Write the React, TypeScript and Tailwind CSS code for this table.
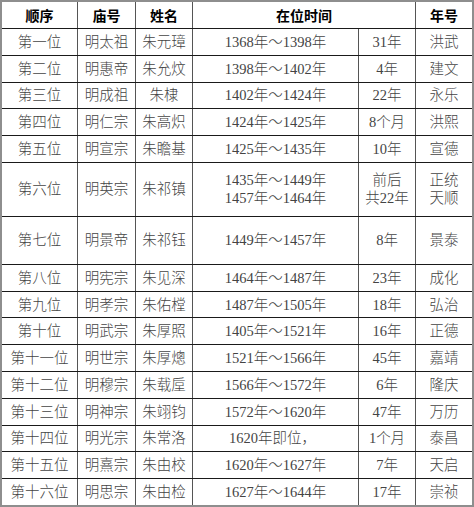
type Cell = string | string[]

interface Row {
  cells: Cell[]
  h?: string
}

const ROWS: Row[] = [
  { cells: ['第一位', '明太祖', '朱元璋', '1368年～1398年', '31年', '洪武'] },
  { cells: ['第二位', '明惠帝', '朱允炆', '1398年～1402年', '4年', '建文'] },
  { cells: ['第三位', '明成祖', '朱棣', '1402年～1424年', '22年', '永乐'] },
  { cells: ['第四位', '明仁宗', '朱高炽', '1424年～1425年', '8个月', '洪熙'] },
  { cells: ['第五位', '明宣宗', '朱瞻基', '1425年～1435年', '10年', '宣德'] },
  {
    cells: [
      '第六位', '明英宗', '朱祁镇',
      ['1435年～1449年', '1457年～1464年'],
      ['前后', '共22年'],
      ['正统', '天顺'],
    ],
    h: 'h-[54px]',
  },
  { cells: ['第七位', '明景帝', '朱祁钰', '1449年～1457年', '8年', '景泰'], h: 'h-[48px]' },
  { cells: ['第八位', '明宪宗', '朱见深', '1464年～1487年', '23年', '成化'] },
  { cells: ['第九位', '明孝宗', '朱佑樘', '1487年～1505年', '18年', '弘治'] },
  { cells: ['第十位', '明武宗', '朱厚照', '1405年～1521年', '16年', '正德'] },
  { cells: ['第十一位', '明世宗', '朱厚熜', '1521年～1566年', '45年', '嘉靖'] },
  { cells: ['第十二位', '明穆宗', '朱载垕', '1566年～1572年', '6年', '隆庆'] },
  { cells: ['第十三位', '明神宗', '朱翊钧', '1572年～1620年', '47年', '万历'] },
  { cells: ['第十四位', '明光宗', '朱常洛', '1620年即位，', '1个月', '泰昌'] },
  { cells: ['第十五位', '明熹宗', '朱由校', '1620年～1627年', '7年', '天启'] },
  { cells: ['第十六位', '明思宗', '朱由检', '1627年～1644年', '17年', '崇祯'] },
]

// column widths include the right border line
const COL_W = ['w-[76px]', 'w-[58px]', 'w-[57px]', 'w-[166px]', 'w-[57px]', 'w-[56px]']

function BodyCell({ value, col }: { value: Cell; col: number }) {
  const last = col === COL_W.length - 1
  const lines = Array.isArray(value) ? value : [value]
  return (
    <div
      className={`${COL_W[col]} shrink-0 flex flex-col items-center justify-center ${
        last ? '' : 'border-r border-[#555]'
      } ${col === 3 && value === '1620年即位，' ? 'pr-[6px]' : ''}`}
    >
      {lines.map((l, i) => (
        <span key={i} className="leading-[18px] whitespace-nowrap">{l}</span>
      ))}
    </div>
  )
}

export default function App() {
  return (
    <div
      className="w-[474px] h-[507px] bg-white border-2 border-[#8e8e8e] flex flex-col text-[14.5px] font-light text-[#444]"
      style={{ fontFamily: '"Liberation Serif", "Noto Sans CJK SC", serif' }}
    >
      {/* header */}
      <div
        className="h-[27px] shrink-0 flex border-b border-[#1a1a1a] text-[14px] font-bold text-black"
        style={{ fontFamily: '"Noto Sans CJK SC", sans-serif' }}
      >
        <div className="w-[76px] flex items-center justify-center border-r border-[#555]">顺序</div>
        <div className="w-[58px] flex items-center justify-center border-r border-[#555]">庙号</div>
        <div className="w-[57px] flex items-center justify-center border-r border-[#555]">姓名</div>
        <div className="w-[223px] flex items-center justify-center border-r border-[#555]">在位时间</div>
        <div className="w-[56px] flex items-center justify-center">年号</div>
      </div>

      {ROWS.map((r, i) => (
        <div
          key={i}
          className={`${r.h ?? 'flex-1'} shrink-0 flex ${
            i === ROWS.length - 1 ? '' : 'border-b border-[#1a1a1a]'
          }`}
        >
          {r.cells.map((c, j) => (
            <BodyCell key={j} value={c} col={j} />
          ))}
        </div>
      ))}
    </div>
  )
}
